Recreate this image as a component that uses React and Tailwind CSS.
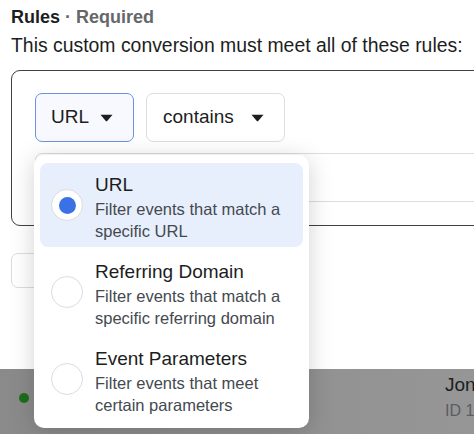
import React from "react";

const font = { fontFamily: '"Liberation Sans", Arial, Helvetica, sans-serif' };

function Caret() {
  return (
    <svg width="13" height="8" viewBox="0 0 13 8" className="shrink-0">
      <path d="M0.5 0.8 L12.5 0.8 L7.2 7 Q6.5 7.7 5.8 7 Z" fill="#1c1e21" />
    </svg>
  );
}

function Radio({ checked }) {
  return (
    <div
      className={
        "w-[32px] h-[32px] rounded-full border-[1.5px] flex items-center justify-center shrink-0 bg-white " +
        (checked ? "border-[#dcdcdc]" : "border-[#dadde1]")
      }
    >
      {checked && <div className="w-[17px] h-[17px] rounded-full bg-[#3a72e6]" />}
    </div>
  );
}

function Item({ title, desc, checked }) {
  return (
    <div
      className={
        "flex items-center rounded-[8px] h-[84px] pl-[11px] pr-[8px] " +
        (checked ? "bg-[#e8effc]" : "")
      }
    >
      <Radio checked={checked} />
      <div className="ml-[12px] mt-[4px] flex flex-col">
        <div className="text-[19px] leading-[26px] text-[#1c1e21]">{title}</div>
        <div className="text-[16.5px] leading-[22px] text-[#444950]">{desc}</div>
      </div>
    </div>
  );
}

export default function App() {
  return (
    <div className="relative w-[474px] h-[434px] overflow-hidden bg-white" style={font}>
      <div className="px-[11px] pt-[5px]">
        <div className="text-[18px] leading-[24px] font-bold text-[#1c1e21]">
          Rules <span className="text-[#65676b]">· Required</span>
        </div>
        <div className="text-[19.4px] leading-[24px] text-[#1c1e21] mt-[4px] whitespace-nowrap">
          This custom conversion must meet all of these rules:
        </div>
      </div>

      <div className="ml-[11px] mt-[13px] w-[480px] h-[156px] border-[1.5px] border-[#3e4042] rounded-[9px] pl-[23px] pt-[22px]">
        <div className="flex gap-[12px]">
          <div className="w-[99px] h-[49px] rounded-[7px] border-[1.5px] border-[#6b93dc] bg-[#f7f9fe] flex items-center justify-between pl-[15px] pr-[20px]">
            <span className="text-[19px] text-[#1c1e21]">URL</span>
            <Caret />
          </div>
          <div className="w-[139px] h-[49px] rounded-[7px] border-[1.5px] border-[#dadde1] bg-white flex items-center justify-between pl-[16px] pr-[20px]">
            <span className="text-[19px] text-[#1c1e21]">contains</span>
            <Caret />
          </div>
        </div>
        <div className="mt-[11px] h-[49px] border-[1.5px] border-[#dadde1] rounded-[7px]" />
      </div>

      <div className="ml-[11px] mt-[27px] w-[120px] h-[35px] border-[1.5px] border-[#dadde1] rounded-[7px]" />

      <div className="absolute left-0 right-0 top-[369px] bottom-0 bg-gradient-to-r from-[#8a8a8a] to-[#969696]">
        <div className="absolute left-[19px] top-[24px] w-[10px] h-[10px] rounded-full bg-[#1b6e1b]" />
        <div className="absolute left-[445px] top-[4px] text-[19px] leading-[24px] text-[#1c1e21] whitespace-nowrap">Jon</div>
        <div className="absolute left-[445px] top-[31px] text-[16px] leading-[22px] text-[#5b5d61] whitespace-nowrap">ID 1</div>
      </div>

      <div className="absolute left-[34px] top-[155px] w-[275px] h-[273px] bg-white rounded-[10px] shadow-[0_4px_24px_rgba(0,0,0,0.18)] px-[6px] pt-[8px] flex flex-col gap-[3px]">
        <Item checked title="URL" desc={<>Filter events that match a<br />specific URL</>} />
        <Item title="Referring Domain" desc={<>Filter events that match a<br />specific referring domain</>} />
        <Item title="Event Parameters" desc={<>Filter events that meet<br />certain parameters</>} />
      </div>
    </div>
  );
}
